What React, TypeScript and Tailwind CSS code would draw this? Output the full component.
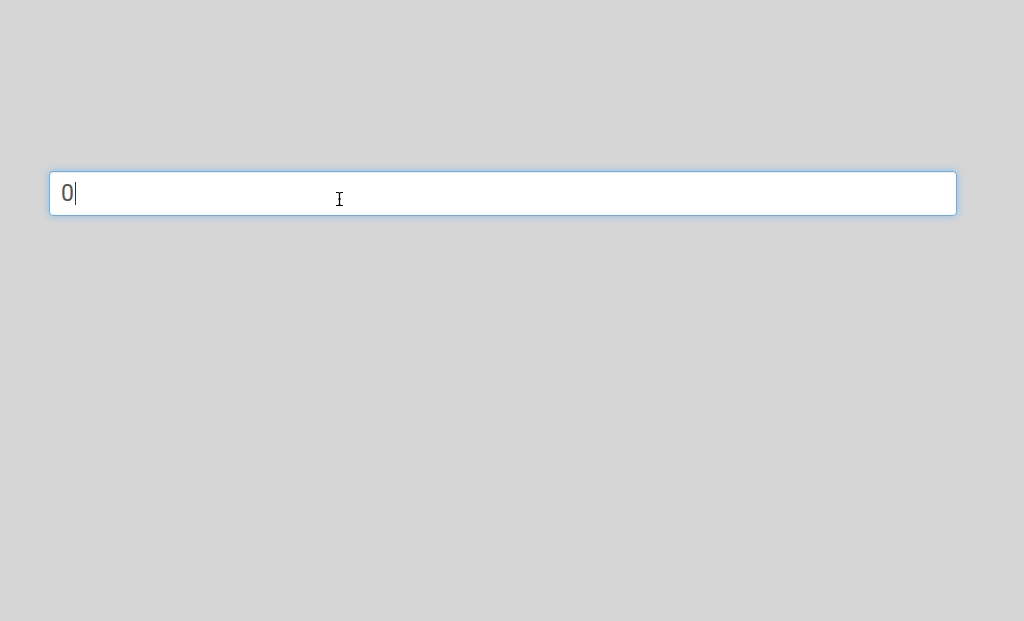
export default function App() {
  return (
    <div className="w-[1024px] h-[621px] bg-[#d6d6d6] pt-[171px] pl-[49px] relative" style={{ fontFamily: 'Roboto, "Liberation Sans", Arial, sans-serif' }}>
      <div className="w-[908px] h-[45px] bg-white border border-[#66afe9] rounded-[4px] shadow-[inset_0_1px_1px_rgba(0,0,0,0.075),0_0_8px_rgba(102,175,233,0.6)] flex items-center pl-[11px] relative">
        <span className="text-[23px] text-[#555] leading-none">0</span>
        <span className="inline-block w-[1px] h-[23px] bg-[#333] ml-[1px]"></span>
        <svg className="absolute left-[285px] top-[19px]" width="9" height="16" viewBox="0 0 9 16">
          <path d="M1 1.5 H3 Q4.5 1.5 4.5 3 V13 Q4.5 14.5 3 14.5 H1 M8 1.5 H6 Q4.5 1.5 4.5 3 M4.5 13 Q4.5 14.5 6 14.5 H8 M3 8 H6" stroke="#000" strokeWidth="1.2" fill="none" />
        </svg>
      </div>
    </div>
  );
}
